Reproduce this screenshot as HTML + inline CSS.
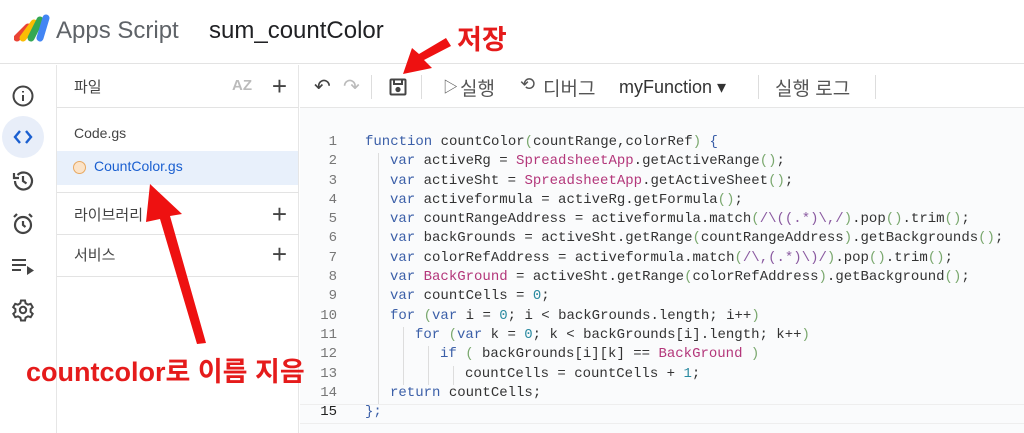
<!DOCTYPE html>
<html><head><meta charset="utf-8"><style>
*{margin:0;padding:0;box-sizing:border-box}
body{width:1024px;height:433px;overflow:hidden;background:#fff;font-family:"Liberation Sans","Noto Sans CJK KR",sans-serif;position:relative;color:#3c4043}
.abs{position:absolute}
.hdr{left:0;top:0;width:1024px;height:64px;border-bottom:1px solid #e3e3e3}
.rail{left:0;top:65px;width:57px;height:368px;border-right:1px solid #e6e6e6}
.files{left:57px;top:65px;width:242px;height:368px;border-right:1px solid #e6e6e6}
.row{position:absolute;left:0;width:242px;border-bottom:1px solid #e3e3e3;font-size:15px;color:#444}
.plus{position:absolute;right:12px;font-size:26px;font-weight:300;color:#444;line-height:1}
.code{left:300px;top:108px;width:724px;height:325px;background:#fafbfc;font-family:"Liberation Mono",monospace;font-size:14px}
.ln{position:absolute;left:0;width:37px;text-align:right;color:#777}
.cl{position:absolute;left:65px;white-space:pre;color:#333}
.k{color:#3b5fa8}.f{color:#b3367a}.p{color:#7aa86e}.r{color:#8a5aa0}.n{color:#2a8aa0}
.tb{left:300px;top:65px;width:724px;height:43px;border-bottom:1px solid #e6e6e6;font-size:19px;color:#555}
</style></head><body>
<div class="abs hdr">
<svg class="abs" style="left:14px;top:14px" width="36" height="30" viewBox="0 0 36 30">
<path d="M3 24 L14 13" stroke="#ea4335" stroke-width="7" stroke-linecap="round"/>
<path d="M9 24 L20 9" stroke="#fbbc04" stroke-width="7" stroke-linecap="round"/>
<path d="M17 24 L26 6" stroke="#34a853" stroke-width="7" stroke-linecap="round"/>
<path d="M26 24 L32 4" stroke="#4285f4" stroke-width="7" stroke-linecap="round"/>
</svg>
<div class="abs" style="left:56px;top:17px;font-size:24px;color:#5f6368">Apps Script</div>
<div class="abs" style="left:209px;top:17px;font-size:24px;color:#202124">sum_countColor</div>
<div class="abs" style="left:457px;top:18px;font-size:27px;font-weight:bold;color:#e51b1b">저장</div>
</div>
<div class="abs rail">
<svg class="abs" style="left:11px;top:19px" width="24" height="24" viewBox="0 0 24 24" fill="none" stroke="#444" stroke-width="2"><circle cx="12" cy="12" r="9.5"/><path d="M12 11v6M12 7v1.5"/></svg>
<div class="abs" style="left:2px;top:51px;width:42px;height:42px;border-radius:50%;background:#e8eef9"></div>
<svg class="abs" style="left:12px;top:62px" width="22" height="20" viewBox="0 0 22 20" fill="none" stroke="#1a5fd0" stroke-width="2.4"><path d="M8 4 L3 10 L8 16M14 4 L19 10 L14 16"/></svg>
<svg class="abs" style="left:11px;top:104px" width="24" height="24" viewBox="0 0 24 24" fill="none" stroke="#444" stroke-width="2.2"><path d="M4 12a8.5 8.5 0 1 0 2.5-6"/><path d="M3 4v5h5"/><path d="M12 7v5l3.5 2.5"/></svg>
<svg class="abs" style="left:11px;top:147px" width="24" height="24" viewBox="0 0 24 24" fill="none" stroke="#444" stroke-width="2.2"><circle cx="12" cy="13" r="8"/><path d="M12 9v4l2.5 2M3 5l3-3M21 5l-3-3"/></svg>
<svg class="abs" style="left:12px;top:192px" width="24" height="20" viewBox="0 0 24 20" fill="#444"><rect x="0" y="2" width="14" height="2"/><rect x="0" y="7" width="14" height="2"/><rect x="0" y="12" width="9" height="2"/><path d="M15 9 L22 13.5 L15 18Z"/></svg>
<svg class="abs" style="left:11px;top:233px" width="24" height="24" viewBox="0 0 24 24" fill="none" stroke="#444" stroke-width="2"><circle cx="12" cy="12" r="3.2"/><path d="M10 2.5h4l.6 2.8 2.4 1.4 2.7-.9 2 3.4-2.1 1.9v2.8l2.1 1.9-2 3.4-2.7-.9-2.4 1.4-.6 2.8h-4l-.6-2.8-2.4-1.4-2.7.9-2-3.4 2.1-1.9v-2.8L2.2 9.2l2-3.4 2.7.9 2.4-1.4z"/></svg>
</div>
<div class="abs files">
<div class="row" style="top:0;height:43px"><span class="abs" style="left:17px;top:11px">파일</span>
<span class="abs" style="left:175px;top:12px;font-size:15px;color:#bbb;font-weight:bold">AZ</span><span class="plus" style="top:8px">+</span></div>
<div class="abs" style="left:17px;top:60px;font-size:14px;color:#444">Code.gs</div>
<div class="abs" style="left:0;top:86px;width:241px;height:34px;background:#e8f0fb"></div>
<div class="abs" style="left:16px;top:96px;width:13px;height:13px;border-radius:50%;border:1.5px solid #e8a860;background:#fbe3c8"></div>
<div class="abs" style="left:37px;top:93px;font-size:14px;color:#1a5fd0">CountColor.gs</div>
<div class="row" style="top:127px;height:43px;border-top:1px solid #e3e3e3"><span class="abs" style="left:17px;top:11px">라이브러리</span><span class="plus" style="top:8px">+</span></div>
<div class="row" style="top:169px;height:43px"><span class="abs" style="left:17px;top:10px">서비스</span><span class="plus" style="top:7px">+</span></div>
</div>
<div class="abs tb">
<span class="abs" style="left:14px;top:9px;font-size:20px;color:#444">↶</span>
<span class="abs" style="left:43px;top:9px;font-size:20px;color:#bbb">↷</span>
<div class="abs" style="left:71px;top:10px;width:1px;height:24px;background:#ddd"></div>
<svg class="abs" style="left:89px;top:13px" width="18" height="18" viewBox="0 0 18 18" fill="none" stroke="#444" stroke-width="2"><rect x="1.5" y="1.5" width="15" height="15" rx="1"/><path d="M5 2v4h8V2"/><circle cx="9" cy="11.5" r="1.6" fill="#444"/></svg>
<div class="abs" style="left:121px;top:10px;width:1px;height:24px;background:#ddd"></div>
<span class="abs" style="left:143px;top:11px;font-size:15px;color:#555">▷</span>
<span class="abs" style="left:160px;top:9px">실행</span>
<span class="abs" style="left:220px;top:9px;font-size:18px">⟲</span>
<span class="abs" style="left:243px;top:9px">디버그</span>
<span class="abs" style="left:319px;top:12px;font-size:18px;color:#333">myFunction ▾</span>
<div class="abs" style="left:458px;top:10px;width:1px;height:24px;background:#ddd"></div>
<span class="abs" style="left:475px;top:9px">실행 로그</span>
<div class="abs" style="left:575px;top:10px;width:1px;height:24px;background:#ddd"></div>
</div>
<div class="abs code">
<div class="abs" style="left:78px;top:45px;width:1px;height:251px;background:#ddd"></div>
<div class="abs" style="left:103px;top:219px;width:1px;height:58px;background:#ddd"></div>
<div class="abs" style="left:128px;top:238px;width:1px;height:39px;background:#ddd"></div>
<div class="abs" style="left:153px;top:258px;width:1px;height:19px;background:#ddd"></div>
<div class="abs" style="left:0;top:296px;width:724px;height:20px;border-top:1px solid #eee;border-bottom:1px solid #eee"></div>
<div class="ln" style="top:26px">1</div><div class="cl" style="top:26px"><span class="k">function</span> countColor<span class="p">(</span>countRange,colorRef<span class="p">)</span> <span class="k">{</span></div>
<div class="ln" style="top:45px">2</div><div class="cl" style="top:45px;left:90px"><span class="k">var</span> activeRg = <span class="f">SpreadsheetApp</span>.getActiveRange<span class="p">()</span>;</div>
<div class="ln" style="top:65px">3</div><div class="cl" style="top:65px;left:90px"><span class="k">var</span> activeSht = <span class="f">SpreadsheetApp</span>.getActiveSheet<span class="p">()</span>;</div>
<div class="ln" style="top:84px">4</div><div class="cl" style="top:84px;left:90px"><span class="k">var</span> activeformula = activeRg.getFormula<span class="p">()</span>;</div>
<div class="ln" style="top:103px">5</div><div class="cl" style="top:103px;left:90px"><span class="k">var</span> countRangeAddress = activeformula.match<span class="p">(</span><span class="r">/\((.*)\,/</span><span class="p">)</span>.pop<span class="p">()</span>.trim<span class="p">()</span>;</div>
<div class="ln" style="top:122px">6</div><div class="cl" style="top:122px;left:90px"><span class="k">var</span> backGrounds = activeSht.getRange<span class="p">(</span>countRangeAddress<span class="p">)</span>.getBackgrounds<span class="p">()</span>;</div>
<div class="ln" style="top:142px">7</div><div class="cl" style="top:142px;left:90px"><span class="k">var</span> colorRefAddress = activeformula.match<span class="p">(</span><span class="r">/\,(.*)\)/</span><span class="p">)</span>.pop<span class="p">()</span>.trim<span class="p">()</span>;</div>
<div class="ln" style="top:161px">8</div><div class="cl" style="top:161px;left:90px"><span class="k">var</span> <span class="f">BackGround</span> = activeSht.getRange<span class="p">(</span>colorRefAddress<span class="p">)</span>.getBackground<span class="p">()</span>;</div>
<div class="ln" style="top:180px">9</div><div class="cl" style="top:180px;left:90px"><span class="k">var</span> countCells = <span class="n">0</span>;</div>
<div class="ln" style="top:200px">10</div><div class="cl" style="top:200px;left:90px"><span class="k">for</span> <span class="p">(</span><span class="k">var</span> i = <span class="n">0</span>; i &lt; backGrounds.length; i++<span class="p">)</span></div>
<div class="ln" style="top:219px">11</div><div class="cl" style="top:219px;left:115px"><span class="k">for</span> <span class="p">(</span><span class="k">var</span> k = <span class="n">0</span>; k &lt; backGrounds[i].length; k++<span class="p">)</span></div>
<div class="ln" style="top:238px">12</div><div class="cl" style="top:238px;left:140px"><span class="k">if</span> <span class="p">(</span> backGrounds[i][k] == <span class="f">BackGround</span> <span class="p">)</span></div>
<div class="ln" style="top:258px">13</div><div class="cl" style="top:258px;left:165px">countCells = countCells + <span class="n">1</span>;</div>
<div class="ln" style="top:277px">14</div><div class="cl" style="top:277px;left:90px"><span class="k">return</span> countCells;</div>
<div class="ln" style="top:296px;color:#222">15</div><div class="cl" style="top:296px"><span class="k">};</span></div>
</div>
<svg class="abs" style="left:0;top:0" width="1024" height="433">
<polygon points="446,38 451,46 424,60 432,68 403,74 412,48 419,54" fill="#ee1111"/>
<polygon points="150,184 182,214 170,216 206,343 197,344 160,219 146,222" fill="#ee1111"/>
</svg>
<div class="abs" style="left:26px;top:350px;font-size:27px;font-weight:bold;color:#e51b1b;white-space:nowrap">countcolor로 이름 지음</div>
</body></html>
